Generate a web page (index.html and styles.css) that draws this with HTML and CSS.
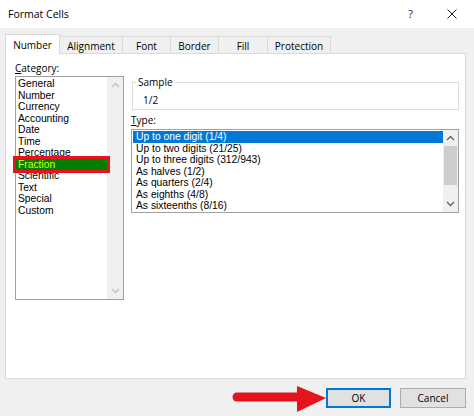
FILE: index.html
```html
<!DOCTYPE html>
<html>
<head>
<meta charset="utf-8">
<link rel="stylesheet" href="styles.css">
</head>
<body>
<div class="window">
  <div class="titlebar">
    <span class="title">Format Cells</span>
    <span class="help">?</span>
    <svg class="close" width="10" height="10" viewBox="0 0 10 10"><path d="M0.5 0.5 L9.5 9.5 M9.5 0.5 L0.5 9.5" stroke="#1a1a1a" stroke-width="1" fill="none"/></svg>
  </div>
  <div class="tabs">
    <div class="tab active">Number</div>
    <div class="tab">Alignment</div>
    <div class="tab">Font</div>
    <div class="tab">Border</div>
    <div class="tab">Fill</div>
    <div class="tab">Protection</div>
  </div>
  <div class="panel">
    <div class="col-left">
      <div class="label"><u>C</u>ategory:</div>
      <div class="listbox cat">
        <ul class="items">
          <li>General</li>
          <li>Number</li>
          <li>Currency</li>
          <li>Accounting</li>
          <li>Date</li>
          <li>Time</li>
          <li>Percentage</li>
          <li class="marked">Fraction</li>
          <li>Scientific</li>
          <li>Text</li>
          <li>Special</li>
          <li>Custom</li>
        </ul>
        <div class="vscroll disabled">
          <svg class="chev" width="9" height="6" viewBox="0 0 9 6"><path d="M1 5 L4.5 1.5 L8 5" stroke="#c2c2c2" stroke-width="1.3" fill="none"/></svg>
          <div class="track"></div>
          <svg class="chev" width="9" height="6" viewBox="0 0 9 6"><path d="M1 1 L4.5 4.5 L8 1" stroke="#c2c2c2" stroke-width="1.3" fill="none"/></svg>
        </div>
      </div>
    </div>
    <div class="col-right">
      <fieldset class="sample">
        <legend>Sample</legend>
        <div class="sample-value">1/2</div>
      </fieldset>
      <div class="label type-label"><u>T</u>ype:</div>
      <div class="listbox type">
        <ul class="items">
          <li class="selected">Up to one digit (1/4)</li>
          <li>Up to two digits (21/25)</li>
          <li>Up to three digits (312/943)</li>
          <li>As halves (1/2)</li>
          <li>As quarters (2/4)</li>
          <li>As eighths (4/8)</li>
          <li>As sixteenths (8/16)</li>
        </ul>
        <div class="vscroll">
          <svg class="chev" width="9" height="6" viewBox="0 0 9 6"><path d="M1 5 L4.5 1.5 L8 5" stroke="#606060" stroke-width="1.3" fill="none"/></svg>
          <div class="track"><div class="thumb"></div></div>
          <svg class="chev" width="9" height="6" viewBox="0 0 9 6"><path d="M1 1 L4.5 4.5 L8 1" stroke="#606060" stroke-width="1.3" fill="none"/></svg>
        </div>
      </div>
    </div>
  </div>
  <div class="footer">
    <button class="btn default">OK</button>
    <button class="btn cancel">Cancel</button>
  </div>
  <svg class="arrow" width="100" height="32" viewBox="0 0 100 32">
    <line x1="9" y1="15" x2="72" y2="15" stroke="#e5131b" stroke-width="9" stroke-linecap="round"/>
    <polygon points="69,4 98,16 69,30" fill="#e5131b"/>
  </svg>
</div>
</body>
</html>
```

FILE: styles.css
```css
* { box-sizing: border-box; }

body {
  margin: 0;
  width: 474px;
  height: 416px;
  overflow: hidden;
  background: #f0f0f0;
  font-family: "Open Sans", "Noto Sans", sans-serif;
  font-size: 10px;
  color: #000;
}

.window {
  position: relative;
  width: 474px;
  height: 416px;
}

.titlebar {
  height: 28px;
  background: #fff;
  display: flex;
  align-items: center;
  padding: 0 17px 0 8px;
}

.title {
  flex: 1 1 auto;
  font-size: 10.5px;
}

.help {
  flex: none;
  font-size: 11px;
  line-height: 14px;
  color: #1a1a1a;
  margin-right: 34px;
}

.close {
  flex: none;
  display: block;
}

.tabs {
  display: grid;
  grid-template-columns: 55px 63px 48px 48px 49px 63px;
  margin: 6px 0 0 5px;
  height: 19px;
  align-items: end;
  position: relative;
  z-index: 1;
}

.tab {
  height: 17px;
  background: #f0f0f0;
  border-top: 1px solid #d9d9d9;
  border-right: 1px solid #d9d9d9;
  display: flex;
  align-items: center;
  justify-content: center;
  padding-top: 1px;
}

.tab:first-child {
  border-left: 1px solid #d9d9d9;
}

.tab.active {
  height: 20px;
  margin-bottom: -1px;
  background: #fff;
  padding-top: 0;
}

.panel {
  margin: 0 8px 0 5px;
  height: 326px;
  border: 1px solid #d9d9d9;
  background: #fff;
  display: flex;
  gap: 7px;
  padding: 7px 0 0 9px;
}

.col-left {
  width: 109px;
}

.col-right {
  width: 328px;
}

.label {
  height: 14px;
  line-height: 14px;
}

.label u {
  text-decoration-thickness: 1px;
  text-underline-offset: 1px;
}

.listbox {
  display: flex;
  border: 1px solid #a0a0a0;
  background: #fff;
}

.items {
  flex: 1;
  list-style: none;
  margin: 0;
  min-width: 0;
  font-family: "Liberation Sans", Arial, sans-serif;
  font-size: 10.3px;
}

.items li {
  height: 11.5px;
  line-height: 11.5px;
  white-space: nowrap;
}

.cat {
  margin-top: 1px;
  height: 224px;
}

.cat .items {
  padding: 1px 0 0 0;
}

.cat .items li {
  padding-left: 2px;
}

.cat .items li.marked {
  background: #008000;
  color: #d4ff1e;
  outline: 3px solid #e8121a;
  position: relative;
}

.vscroll {
  width: 15px;
  background: #f0f0f0;
  display: flex;
  flex-direction: column;
  align-items: center;
}

.cat .vscroll {
  width: 16px;
}

.chev {
  display: block;
  margin: 5px 0;
}

.track {
  flex: 1;
  width: 100%;
  padding: 0 1px;
}

.thumb {
  height: 39px;
  background: #cdcdcd;
}

.sample {
  margin: 14px 0 0 1px;
  padding: 0 0 2px 3px;
  border: 1px solid #dcdcdc;
  min-width: 0;
  width: 327px;
}

.sample legend {
  padding: 0 2px;
  line-height: 14px;
}

.sample-value {
  margin-top: 4px;
  padding-left: 7px;
  line-height: 14px;
}

.type-label {
  margin-top: 3px;
}

.type {
  margin-top: 2px;
  height: 84px;
}

.type .items {
  padding: 1px 0 0 1px;
}

.type .items li {
  padding-left: 3px;
}

.type .items li.selected {
  background: #0078d7;
  color: #fff;
}

.footer {
  display: flex;
  justify-content: flex-end;
  gap: 9px;
  padding: 9px 8px 0 0;
}

.btn {
  height: 20px;
  padding: 0;
  background: #e1e1e1;
  border: 1px solid #adadad;
  font-family: inherit;
  font-size: 10px;
  color: #000;
}

.btn.default {
  width: 65px;
  border: 2px solid #0078d7;
}

.btn.cancel {
  width: 66px;
}

.arrow {
  position: absolute;
  left: 228px;
  top: 382px;
}
```
